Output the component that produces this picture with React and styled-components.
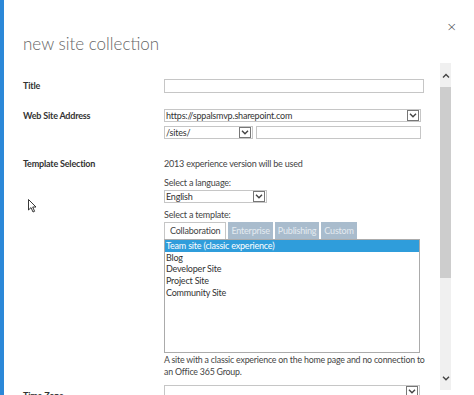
import React from 'react';
import styled, { createGlobalStyle } from 'styled-components';

const GlobalStyle = createGlobalStyle`
    html, body {
        margin: 0;
        padding: 0;
        background: #fff;
    }
    body {
        font-family: Lato, "Noto Sans", sans-serif;
        font-size: 9px;
        letter-spacing: -0.2px;
        color: #444;
    }
    * {
        box-sizing: border-box;
    }
`;

const templates = ['Team site (classic experience)', 'Blog', 'Developer Site', 'Project Site', 'Community Site'];
const tabs = ['Collaboration', 'Enterprise', 'Publishing', 'Custom'];

function Chevron({ up }) {
    return (
        <svg width="8" height="5" viewBox="0 0 8 5">
            <path d={up ? 'M1 4.5 L4 1.5 L7 4.5' : 'M1 0.8 L4 3.8 L7 0.8'} fill="none" stroke="#444" strokeWidth="1.4" />
        </svg>
    );
}

function Select({ value, width }) {
    return (
        <SelectBox $width={width}>
            <span>{value}</span>
            <ArrowBox><Chevron /></ArrowBox>
        </SelectBox>
    );
}

export default function App() {
    return (
        <>
            <GlobalStyle />
            <Frame>
                <AccentBar />
                <Main>
                    <Header>
                        <Title>new site collection</Title>
                        <Close>×</Close>
                    </Header>
                    <Body>
                        <Form>
                            <Row>
                                <Label>Title</Label>
                                <Field>
                                    <TextInput $width={260} />
                                </Field>
                            </Row>
                            <Row $gap={16}>
                                <Label>Web Site Address</Label>
                                <Field>
                                    <Select value="https://sppalsmvp.sharepoint.com" width={257} />
                                    <Line>
                                        <Select value="/sites/" width={89} />
                                        <TextInput $width={165} $height={13} />
                                    </Line>
                                </Field>
                            </Row>
                            <Row $gap={18}>
                                <Label>Template Selection</Label>
                                <Field>
                                    <Text>2013 experience version will be used</Text>
                                    <Text $top={5}>Select a language:</Text>
                                    <Select value="English" width={103} />
                                    <Text $top={5}>Select a template:</Text>
                                    <TabBar>
                                        {tabs.map((t, i) => (
                                            <Tab key={t} $active={i === 0}>{t}</Tab>
                                        ))}
                                    </TabBar>
                                    <ListBox>
                                        {templates.map((t, i) => (
                                            <ListItem key={t} $selected={i === 0}>{t}</ListItem>
                                        ))}
                                    </ListBox>
                                    <Description>
                                        A site with a classic experience on the home page and no connection to an Office 365 Group.
                                    </Description>
                                </Field>
                            </Row>
                            <Row $gap={7}>
                                <Label $top={4}>Time Zone</Label>
                                <Field>
                                    <Select value="" width={256} />
                                </Field>
                            </Row>
                        </Form>
                        <Scrollbar>
                            <ScrollArrow><Chevron up /></ScrollArrow>
                            <ScrollTrack>
                                <Thumb />
                            </ScrollTrack>
                            <ScrollArrow><Chevron /></ScrollArrow>
                        </Scrollbar>
                    </Body>
                    <Cursor width="9" height="14" viewBox="0 0 9 14">
                        <path d="M0.5 0.5 L0.5 11 L3 8.6 L5 13 L6.6 12.3 L4.7 8 L8 8 Z" fill="#fff" stroke="#222" strokeWidth="0.9" />
                    </Cursor>
                </Main>
            </Frame>
        </>
    );
}

const Frame = styled.div`
    width: 100%;
    height: 100vh;
    display: flex;
    overflow: hidden;
`;

const AccentBar = styled.div`
    width: 4px;
    flex-shrink: 0;
    background: #2b88d8;
`;

const Main = styled.div`
    flex: 1;
    position: relative;
    display: flex;
    flex-direction: column;
    padding-left: 19px;
`;

const Header = styled.div`
    height: 63px;
    display: flex;
    justify-content: space-between;
    align-items: flex-start;
`;

const Title = styled.h1`
    margin: 32px 0 0;
    font-size: 17px;
    font-weight: 300;
    line-height: 24px;
    letter-spacing: 0;
    color: #666;
`;

const Close = styled.div`
    margin: 19px 17px 0 0;
    font-size: 13px;
    line-height: 16px;
    color: #444;
    font-family: "DejaVu Sans", sans-serif;
    font-weight: 300;
`;

const Body = styled.div`
    flex: 1;
    display: flex;
    min-height: 0;
`;

const Form = styled.div`
    width: 401px;
    padding-top: 16px;
    display: flex;
    flex-direction: column;
`;

const Row = styled.div`
    display: grid;
    grid-template-columns: 141px 1fr;
    margin-top: ${p => p.$gap || 0}px;
`;

const Label = styled.div`
    font-weight: 700;
    color: #333;
    line-height: 14px;
    margin-top: ${p => p.$top || 0}px;
`;

const Field = styled.div`
    display: flex;
    flex-direction: column;
    align-items: flex-start;
`;

const Line = styled.div`
    display: flex;
    gap: 3px;
    margin-top: 4px;
`;

const TextInput = styled.div`
    width: ${p => p.$width}px;
    height: ${p => p.$height || 14}px;
    border: 1px solid #c6c6c6;
    background: #fff;
`;

const SelectBox = styled.div`
    width: ${p => p.$width}px;
    height: 13px;
    border: 1px solid #c6c6c6;
    display: flex;
    align-items: center;
    justify-content: space-between;
    padding-left: 1px;
    color: #333;
    line-height: 11px;
`;

const ArrowBox = styled.div`
    width: 12px;
    height: 11px;
    border: 1px solid #777;
    margin-right: 1px;
    display: flex;
    align-items: center;
    justify-content: center;
    background: #fff;
`;

const Text = styled.div`
    line-height: 14px;
    margin-top: ${p => p.$top || 0}px;
`;

const TabBar = styled.div`
    display: flex;
    gap: 2px;
`;

const Tab = styled.div`
    height: 17px;
    padding: 0 ${p => p.$active ? 5 : 2}px;
    line-height: 16px;
    background: ${p => p.$active ? '#fff' : '#a9bccd'};
    color: ${p => p.$active ? '#444' : '#e4ebf1'};
    border: 1px solid ${p => p.$active ? '#c6c6c6' : '#a9bccd'};
    border-bottom: none;
`;

const ListBox = styled.div`
    width: 256px;
    height: 114px;
    border: 1px solid #ababab;
`;

const ListItem = styled.div`
    line-height: 11.7px;
    padding-left: 1px;
    background: ${p => p.$selected ? '#2f9ddb' : 'transparent'};
    color: ${p => p.$selected ? '#fff' : '#333'};
`;

const Description = styled.div`
    width: 262px;
    font-size: 8.8px;
    line-height: 12px;
    margin-top: 1px;
    color: #444;
`;

const Scrollbar = styled.div`
    width: 11px;
    margin-left: 16px;
    display: flex;
    flex-direction: column;
    background: #f0f0f0;
    height: 327px;
`;

const ScrollArrow = styled.div`
    height: 24px;
    display: flex;
    align-items: center;
    justify-content: center;
`;

const ScrollTrack = styled.div`
    flex: 1;
`;

const Thumb = styled.div`
    height: 191px;
    background: #cdcdcd;
`;

const Cursor = styled.svg`
    position: absolute;
    left: 24px;
    top: 199px;
`;
